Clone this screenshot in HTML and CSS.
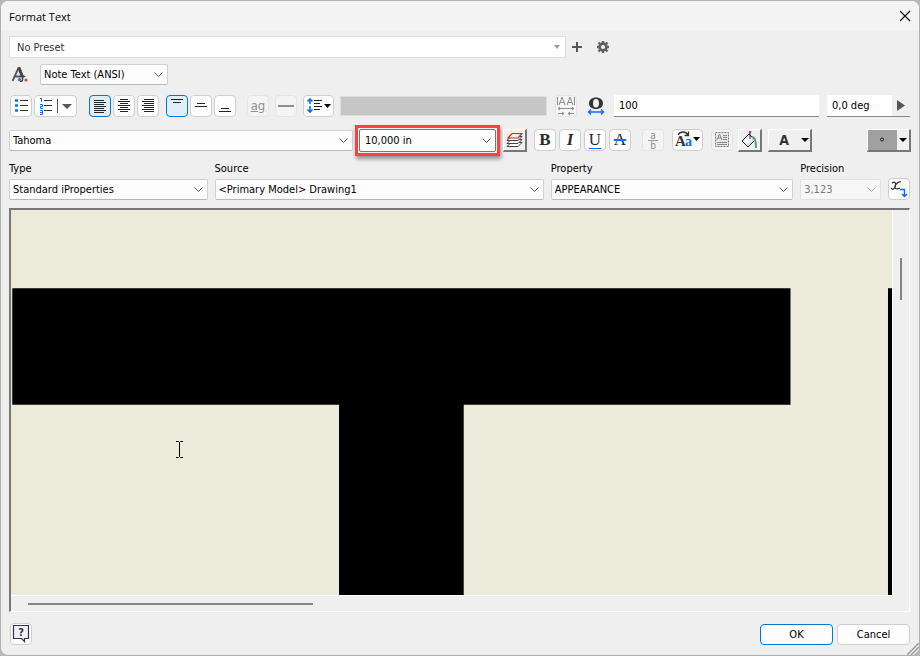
FILE: index.html
```html
<!DOCTYPE html>
<html lang="en">
<head>
    <meta charset="UTF-8">
    <meta name="viewport" content="width=device-width, initial-scale=1.0">
    <title>Format Text</title>
    <link rel="stylesheet" href="styles.css">
</head>
<body>
    <form class="dialog">
        <header class="titlebar">
            <h1>Format Text</h1>
            <button type="button" class="plain" aria-label="Close">
                <svg width="12" height="12" viewBox="0 0 12 12"><path d="M1 1l10 10M11 1L1 11" stroke="#111" stroke-width="1.2"/></svg>
            </button>
        </header>

        <div class="row row-preset">
            <select class="preset" aria-label="Preset"><option>No Preset</option></select>
            <button type="button" class="plain" aria-label="Add preset">
                <svg width="12" height="12" viewBox="0 0 12 12"><path d="M6 1v10M1 6h10" stroke="#555" stroke-width="2"/></svg>
            </button>
            <button type="button" class="plain gear" aria-label="Preset settings">
                <svg width="14" height="14" viewBox="0 0 14 14"><circle cx="7" cy="7" r="3.4" fill="none" stroke="#606060" stroke-width="2.6"/><path d="M7 1v2M7 11v2M1 7h2M11 7h2M2.5 2.5l2 2M9.5 9.5l2 2M11.5 2.5l-2 2M4.5 9.5l-2 2" stroke="#606060" stroke-width="2.4"/></svg>
            </button>
        </div>

        <div class="row row-style">
            <svg class="style-icon" width="17" height="17" viewBox="0 0 17 17"><path d="M1.5 15L7.5 2h1L12 12M4 10.5h6" fill="none" stroke="#555" stroke-width="1.8"/><path d="M8 2l3.5 9" stroke="#444" stroke-width="3"/><path d="M9 15c2 1 3-1 2.5-2.5S13 9 14 11" fill="none" stroke="#444" stroke-width="1.5"/><circle cx="8.5" cy="13.5" r="1.5" fill="#1d6fd0"/><circle cx="15" cy="14" r="1.6" fill="#e03a3a"/></svg>
            <select class="style-select" aria-label="Style"><option>Note Text (ANSI)</option></select>
        </div>

        <div class="row row-tools">
            <div class="group">
                <button type="button" class="tool" aria-label="Bullets">
                    <svg width="20" height="20" viewBox="0 0 20 20"><path d="M4 4.500h3M4 9.500h3M4 14.500h3" stroke="#0a6cff" stroke-width="2.400"/><path d="M9 4.500h8M9 9.500h8M9 14.500h8" stroke="#333"/></svg>
                </button>
                <button type="button" class="tool numbered" aria-label="Numbering">
                    <svg width="40" height="20" viewBox="0 0 40 20"><path d="M5.500 2v4M4 2.500h2M4 8.500h2.500v2h-2v2H7M4 14.500h2.500v4H4M4 16.500h2" fill="none" stroke="#0a6cff"/><path d="M8 4.500h8M8 9.500h8M8 14.500h8" stroke="#333"/><path d="M21.500 3v14" stroke="#555"/><path d="M26 8h10l-5 5z" fill="#555"/></svg>
                </button>
            </div>
            <div class="group">
                <button type="button" class="tool on" aria-label="Align left">
                    <svg width="20" height="20" viewBox="0 0 20 20"><path d="M4 4.500h10M4 6.500h12M4 8.500h10M4 10.500h12M4 12.500h10M4 14.500h12M4 16.500h10" stroke="#222"/></svg>
                </button>
                <button type="button" class="tool" aria-label="Align center">
                    <svg width="20" height="20" viewBox="0 0 20 20"><path d="M6 3.500h8M4 5.500h12M6 7.500h8M4 9.500h12M6 11.500h8M4 13.500h12M6 15.500h8" stroke="#222"/></svg>
                </button>
                <button type="button" class="tool" aria-label="Align right">
                    <svg width="20" height="20" viewBox="0 0 20 20"><path d="M6 3.500h10M4 5.500h12M6 7.500h10M4 9.500h12M6 11.500h10M4 13.500h12M6 15.500h10" stroke="#222"/></svg>
                </button>
            </div>
            <div class="group">
                <button type="button" class="tool on" aria-label="Align top">
                    <svg width="20" height="20" viewBox="0 0 20 20"><path d="M4 3.500h12M6 6.500h8" stroke="#222"/></svg>
                </button>
                <button type="button" class="tool" aria-label="Align middle">
                    <svg width="20" height="20" viewBox="0 0 20 20"><path d="M6 7.500h8M4 10.500h12" stroke="#222"/></svg>
                </button>
                <button type="button" class="tool" aria-label="Align bottom">
                    <svg width="20" height="20" viewBox="0 0 20 20"><path d="M6 12.500h8M4 15.500h12" stroke="#222"/></svg>
                </button>
            </div>
            <div class="group group-wide">
                <button type="button" class="tool strike-ag" aria-label="Baseline" disabled>ag</button>
                <button type="button" class="tool" aria-label="Line" disabled>
                    <svg width="20" height="20" viewBox="0 0 20 20"><path d="M2 10h16" stroke="#8e8e8e" stroke-width="2"/></svg>
                </button>
                <button type="button" class="tool spacing" aria-label="Line spacing">
                    <svg width="28" height="20" viewBox="0 0 28 20"><path d="M5 3v5M5 10v6M2.500 5.500L5 3l2.500 2.500M2.500 13.500L5 16l2.500-2.500" fill="none" stroke="#0a6cff" stroke-width="1.600"/><path d="M9 4.500h8M9 7.500h6M9 10.500h8M9 13.500h6" stroke="#222"/><path d="M19 8h7l-3.500 4z" fill="#000"/></svg>
                </button>
            </div>
            <input type="text" class="spacing-value" aria-label="Spacing value" disabled>
            <button type="button" class="tool" aria-label="Fit text" disabled>
                <svg width="20" height="20" viewBox="0 0 20 20"><path d="M1.500 1v8M18.500 1v8M3 9l3-8 3 8M4 6.500h4M11 9l3-8 3 8M12 6.500h4M2 12.500h16M4 11L2 12.500 4 14M16 11l2 1.500-2 1.500M2 17.500h6M18 17.500h-6M6 16l2 1.500L6 19M14 16l-2 1.500 2 1.500" fill="none" stroke="#8e8e8e"/></svg>
            </button>
            <svg class="stretch-icon" width="18" height="18" viewBox="0 0 18 18" role="img" aria-label="Stretch"><path fill-rule="evenodd" fill="#333" d="M9 0.500c4.200 0 7 2.400 7 5.700S13.200 12 9 12 2 9.500 2 6.200 4.800.5 9 .5zM9 2C6.800 2 6 3.500 6 6.200s.8 4.300 3 4.300 3-1.600 3-4.300S11.200 2 9 2z"/><path d="M1.500 15h15M4 12.500L1.500 15 4 17.500M14 12.500l2.500 2.500-2.500 2.500" fill="none" stroke="#0a6cff" stroke-width="1.400"/></svg>
            <input type="text" class="stretch-value" aria-label="Stretch percentage" value="100">
            <div class="angle">
                <input type="text" aria-label="Rotation" value="0,0 deg">
                <button type="button" aria-label="Rotation options">
                    <svg width="8" height="11" viewBox="0 0 8 11"><path d="M0 0l8 5.500L0 11z" fill="#555"/></svg>
                </button>
            </div>
        </div>

        <div class="row row-font">
            <select class="font-select" aria-label="Font"><option>Tahoma</option></select>
            <div class="size-frame">
                <select aria-label="Text size"><option>10,000 in</option></select>
            </div>
            <button type="button" class="raised" aria-label="Layers">
                <svg width="20" height="18" viewBox="0 0 20 18"><g fill="#fff" stroke="#444"><path d="M2 15.500h11l4-4H6z"/><path d="M2 12.500h11l4-4H6z"/><path d="M2 9.500h11l4-4H6z"/></g><path d="M3 7h10l4-4.500H7z" fill="#eee" stroke="#d22" stroke-width="1.200"/></svg>
            </button>
            <div class="group group-font">
                <button type="button" class="tool serif bold" aria-label="Bold">B</button>
                <button type="button" class="tool serif bold italic" aria-label="Italic">I</button>
                <button type="button" class="tool serif underline" aria-label="Underline">U</button>
                <button type="button" class="tool serif struck" aria-label="Strikethrough">A</button>
            </div>
            <button type="button" class="tool stack" aria-label="Stack" disabled><span>a</span><span>b</span></button>
            <button type="button" class="tool case" aria-label="Change case">
                <svg width="28" height="20" viewBox="0 0 28 20"><path d="M4 5c2-4 8-4 10 0M14.500 1.500V5.500h-4" fill="none" stroke="#333" stroke-width="1.300"/><path d="M19 7h7l-3.500 4z" fill="#000"/><text x="1" y="16" class="case-big">A</text><text x="11" y="16" class="case-small">a</text></svg>
            </button>
            <button type="button" class="tool" aria-label="Text box" disabled>
                <svg width="20" height="20" viewBox="0 0 20 20"><rect x="3.500" y="2.500" width="13" height="14" fill="#e8e8e8" stroke="#777" stroke-dasharray="2 1"/><path d="M5 10l2.500-6L10 10M6 8h3M11 5.500h4M11 7.500h4M11 9.500h4M5 12.500h10M5 14.500h10" fill="none" stroke="#888"/></svg>
            </button>
            <button type="button" class="raised" aria-label="Fill">
                <svg width="20" height="18" viewBox="0 0 20 18"><path d="M9 3l6 6-7 7-6-6z" fill="#dfe3e6" stroke="#222"/><path d="M4 10l5-5 3 3-5 5z" fill="#fff"/><path d="M10 1v7" stroke="#222"/><path d="M9 1h2" stroke="#e0d" stroke-width="2"/><path d="M12 6q4 0 4 11" fill="none" stroke="#5a9a80" stroke-width="2"/></svg>
            </button>
            <button type="button" class="raised color" aria-label="Text color"><b>A</b>
                <svg width="8" height="4" viewBox="0 0 8 4"><path d="M0 0h8L4 4z"/></svg>
            </button>
            <button type="button" class="raised symbol" aria-label="Insert symbol">
                <svg class="swatch" width="29" height="20" viewBox="0 0 29 20"><rect width="29" height="20" fill="#a0a0a0"/><circle cx="14" cy="9.500" r="1.500" fill="none" stroke="#222"/></svg>
                <svg width="8" height="4" viewBox="0 0 8 4"><path d="M0 0h8L4 4z"/></svg>
            </button>
        </div>

        <div class="properties">
            <div class="field">
                <label for="type">Type</label>
                <select id="type"><option>Standard iProperties</option></select>
            </div>
            <div class="field">
                <label for="source">Source</label>
                <select id="source"><option>&lt;Primary Model&gt; Drawing1</option></select>
            </div>
            <div class="field">
                <label for="property">Property</label>
                <select id="property"><option>APPEARANCE</option></select>
            </div>
            <div class="field">
                <label for="precision">Precision</label>
                <select id="precision" disabled><option>3,123</option></select>
            </div>
            <button type="button" class="tool add-param" aria-label="Add text parameter">
                <svg width="20" height="20" viewBox="0 0 20 20"><path d="M3 4c3-2 4 0 3.500 3S3 11 2 9M12 3c-3-1-5 2-6 4s1 4 5 2" fill="none" stroke="#333" stroke-width="1.300"/><path d="M11 10.500h4.500V17M13 15l2.500 2.500L18 15" fill="none" stroke="#0a6cff" stroke-width="1.400"/></svg>
            </button>
        </div>

        <div class="editor">
            <div class="page" contenteditable="true" role="textbox" aria-label="Note text" spellcheck="false"><span class="letter">T</span><span>E</span></div>
            <div class="vscroll"><div class="thumb"></div></div>
            <div class="hscroll"><div class="thumb"></div></div>
            <svg class="ibeam" width="9" height="17" viewBox="0 0 9 17"><path d="M1 .5h2.500l1 1 1-1H8M4.500 1v15M1 16.500h2.500l1-1 1 1H8" fill="none" stroke="#000"/></svg>
        </div>

        <footer class="footer">
            <button type="button" class="tool" aria-label="Help">
                <svg width="20" height="20" viewBox="0 0 20 20"><path d="M2.500 1.500h15v13h-4v3l-3-3h-8z" fill="#edf1f5" stroke="#334" stroke-width="1.200"/><text x="10" y="12" class="help-mark">?</text></svg>
            </button>
            <button type="submit" class="btn primary">OK</button>
            <button type="button" class="btn">Cancel</button>
            <svg class="grip" width="12" height="12" viewBox="0 0 12 12"><path d="M0 12L12 0M4 12l8-8M8 12l4-4" stroke="#999" stroke-width="1.500"/></svg>
        </footer>
    </form>
</body>
</html>
```
FILE: styles.css
```css
* {
    box-sizing: border-box;
}

body {
    margin: 0;
    background-color: #b8b8b8;
    font-family: "DejaVu Sans Condensed", "DejaVu Sans", sans-serif;
    font-size: 11px;
    color: #000;
}

button, input, select {
    font: inherit;
    color: inherit;
    margin: 0;
    padding: 0;
}

svg {
    display: block;
    flex: none;
}

.dialog {
    position: relative;
    display: flex;
    flex-direction: column;
    min-height: 100vh;
    border: 1px solid #b0b0b0;
    border-radius: 8px;
    background-color: #efefef;
    overflow: hidden;
}

/* title bar */
.titlebar {
    display: flex;
    align-items: center;
    justify-content: space-between;
    height: 30px;
    padding: 0 8px;
    background-color: #f3f3f3;
}

.titlebar h1 {
    margin: 0;
    font-family: "Open Sans", "Noto Sans", sans-serif;
    font-size: 11px;
    font-weight: normal;
}

.plain {
    border: 0;
    background: none;
}

/* rows */
.row {
    display: flex;
    align-items: center;
    margin: 0 9px 0 8px;
}

select {
    appearance: none;
    height: 21px;
    min-width: 0;
    padding: 0 18px 0 3px;
    border: 1px solid #d0d0d0;
    border-bottom-color: #b8b8b8;
    border-radius: 2px;
    background: #fdfdfd url("data:image/svg+xml,%3Csvg xmlns='http://www.w3.org/2000/svg' width='9' height='5'%3E%3Cpath d='M.5 .5l4 4 4-4' fill='none' stroke='%23555'/%3E%3C/svg%3E") no-repeat right 4px center;
}

select:disabled {
    color: #777;
    opacity: 1;
    border-color: #e2e2e2;
    background-color: #f7f7f7;
    background-image: url("data:image/svg+xml,%3Csvg xmlns='http://www.w3.org/2000/svg' width='9' height='5'%3E%3Cpath d='M.5 .5l4 4 4-4' fill='none' stroke='%23aaa'/%3E%3C/svg%3E");
}

.row-preset {
    gap: 5px;
    margin-top: 5px;
}

.preset {
    width: 61.8%;
    height: 22px;
    padding-left: 7px;
    border-color: #ddd;
    border-radius: 0;
    color: #333;
    background-color: #fff;
    background-image: url("data:image/svg+xml,%3Csvg xmlns='http://www.w3.org/2000/svg' width='6' height='4'%3E%3Cpath d='M0 0h6L3 4z' fill='%23999'/%3E%3C/svg%3E");
    background-position: right 5px center;
}

.gear {
    margin-left: 8px;
}

.row-style {
    gap: 12px;
    margin-top: 6px;
    padding-left: 2px;
}

.style-select {
    width: 128px;
}

.row-tools {
    margin-top: 9px;
    height: 24px;
    gap: 8px;
}

.group {
    display: flex;
    gap: 2px;
}

.row-tools .group {
    margin-right: -1px;
}

.row-tools .group:first-child {
    margin: 0 4px 0 1px;
}

.row-tools .group-wide {
    gap: 6px;
    margin: 0 -2px 0 4px;
}

.tool {
    display: flex;
    align-items: center;
    justify-content: center;
    flex: none;
    width: 22px;
    height: 22px;
    border: 1px solid #cfcfcf;
    border-radius: 4px;
    background-color: #fdfdfd;
}

.tool.on {
    border-color: #0a74cc;
    background-color: #e0eef9;
}

.tool:disabled {
    border-color: #e4e4e4;
    background-color: #f4f4f4;
    color: #8e8e8e;
}

.numbered {
    width: 43px;
}

.strike-ag {
    font-size: 13px;
    line-height: 16px;
    text-decoration: underline;
}

.spacing, .case {
    width: 31px;
}

input {
    min-width: 0;
    height: 22px;
    padding: 0 5px;
    border: 0;
    border-bottom: 1px solid #888;
    background-color: #fff;
}

.spacing-value {
    flex: 1;
    height: 20px;
    border: 1px solid #ddd;
    background-color: #c6c6c6;
}

.stretch-icon {
    margin: 0 1px 0 2px;
}

.stretch-value {
    flex: 1;
}

.angle {
    display: flex;
    width: 83px;
    border-bottom: 1px solid #888;
}

.angle input {
    flex: 1;
    height: 21px;
    border: 0;
}

.angle button {
    display: flex;
    align-items: center;
    justify-content: center;
    width: 18px;
    border: 0;
    background-color: #efefef;
}

/* font row */
.row-font {
    height: 30px;
    margin: 7px 8px 0;
}

.font-select {
    flex: 1;
}

.size-frame {
    display: flex;
    width: 145px;
    height: 31px;
    margin: 0 3px 0 2px;
    padding: 1px;
    border: 3px solid #f94144;
    box-shadow: 1px 3px 4px rgba(0, 0, 0, 0.4);
}

.size-frame select {
    flex: 1;
    height: 23px;
    padding-left: 5px;
    border: 1px solid #777;
}

.raised {
    display: flex;
    align-items: center;
    justify-content: center;
    flex: none;
    width: 24px;
    height: 23px;
    border: 1px solid #fff;
    border-right: 2px solid #777;
    border-bottom: 2px solid #777;
    background-color: #f0f0f0;
}

.group-font {
    gap: 3px;
    margin: 0 11px 0 7px;
}

.serif {
    font-family: "Liberation Serif", serif;
    font-size: 17px;
    line-height: 18px;
    color: #2b2b2b;
}

.bold {
    font-weight: bold;
}

.italic {
    font-style: italic;
}

.underline {
    text-decoration: underline 1px #0a6cff;
    text-underline-offset: 3px;
}

.struck {
    text-decoration: line-through 2px #0a6cff;
}

.stack {
    flex-direction: column;
    font-size: 10px;
    line-height: 9px;
}

.stack span:first-child {
    padding: 0 2px;
    border-bottom: 1px solid #999;
}

.case {
    margin: 0 8px;
}

.case-big {
    font: bold 15px "Liberation Serif", serif;
    fill: #333;
}

.case-small {
    font: bold 14px "Liberation Serif", serif;
    fill: #0a6cff;
}

.row-font .tool + .raised {
    margin: 0 6px 0 5px;
}

.color {
    width: 44px;
    gap: 12px;
    justify-content: flex-end;
    padding-right: 1px;
    font-size: 14px;
    color: #333;
}

.symbol {
    width: 44px;
    margin-left: 55px;
    justify-content: space-between;
    padding-right: 2px;
}

/* property fields */
.properties {
    display: grid;
    grid-template-columns: 199fr 330fr 243fr 81fr 22px;
    align-items: end;
    gap: 7px;
    margin: 7px 9px 0 8px;
}

.field {
    display: flex;
    flex-direction: column;
    gap: 3px;
    min-width: 0;
}

.field label {
    line-height: 14px;
}

/* text area */
.editor {
    position: relative;
    display: grid;
    grid-template-columns: 1fr 17px;
    grid-template-rows: 1fr 16px;
    flex: 1;
    margin: 8px 9px 11px 8px;
    border: 2px solid #777;
    border-right: 1px solid #fff;
    border-bottom: 1px solid #fff;
}

.page {
    height: 0;
    min-height: 100%;
    min-width: 0;
    padding-left: 4px;
    overflow: hidden;
    white-space: nowrap;
    background-color: #eceadb;
    font-size: 1403px;
    line-height: 1231px;
    outline: 0;
}

/* kerned pair */
.letter {
    display: inline-block;
    width: 749px;
}

.vscroll {
    padding: 48px 0 0 7px;
    border-left: 1px solid #fff;
}

.vscroll .thumb {
    width: 2px;
    height: 42px;
    background-color: #858585;
}

.hscroll {
    padding: 7px 0 0 17px;
    border-top: 1px solid #fff;
}

.hscroll .thumb {
    width: 33%;
    height: 2px;
    background-color: #858585;
}

.ibeam {
    position: absolute;
    left: 164px;
    top: 231px;
}

/* buttons */
.footer {
    display: flex;
    align-items: center;
    gap: 4px;
    margin: 0 9px 10px;
}

.footer .tool {
    margin-right: auto;
}

.help-mark {
    font-size: 11px;
    font-weight: bold;
    text-anchor: middle;
    fill: #334;
}

.btn {
    width: 73px;
    height: 21px;
    border: 1px solid #cfcfcf;
    border-radius: 4px;
    background-color: #fdfdfd;
}

.btn.primary {
    border-color: #0078d4;
}

.grip {
    position: absolute;
    right: 0;
    bottom: 0;
}
```
